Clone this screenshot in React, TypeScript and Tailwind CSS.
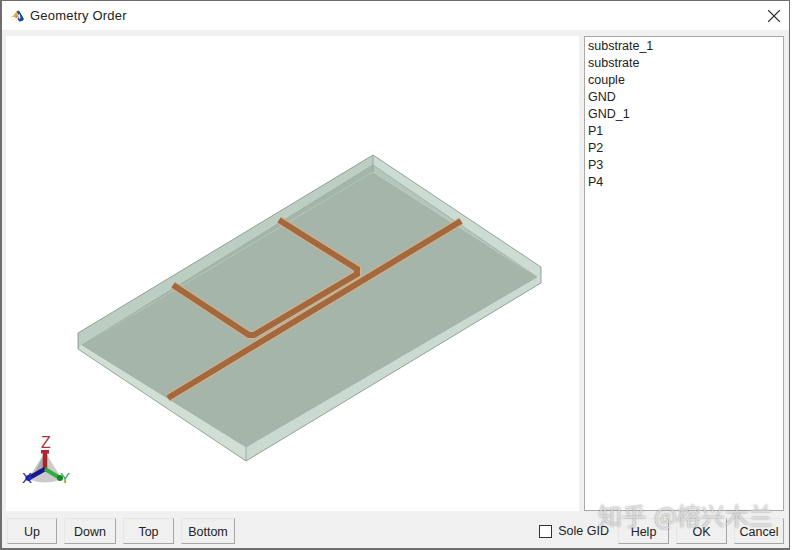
import { X } from "lucide-react";

const objects = ["substrate_1", "substrate", "couple", "GND", "GND_1", "P1", "P2", "P3", "P4"];

function Btn({ label, w }: { label: string; w: string }) {
  return (
    <button className={`h-[26px] ${w} shrink-0 bg-[#f0f0f0] border border-t-[#e6e6e6] border-l-[#e6e6e6] border-r-[#a6a6a6] border-b-[#a6a6a6] text-[12.5px] text-[#222] pt-0.5`}>
      {label}
    </button>
  );
}

function MatlabIcon() {
  return (
    <svg width="14" height="12" viewBox="0 0 14 12" className="shrink-0">
      <path d="M0 7.500 L3.500 5.500 L6.500 1.500 L7.500 4 L5 7 L2.500 6.800 Z" fill="#e3a93f" />
      <path d="M6.500 1.500 L8.500 0.500 L10 2 L14 9 L12.500 11 L9 11.500 L7.500 8.500 L8.500 5 Z" fill="#1f4a8c" />
      <path d="M8 5.500 L9.500 3.500 L10.500 8 L9 9 Z" fill="#f4f4f4" />
      <path d="M5 7 L7.500 4 L7.800 6.500 L6 8.500 Z" fill="#c9812a" />
    </svg>
  );
}

function Triad() {
  return (
    <svg width="54" height="58" viewBox="0 0 54 58" className="absolute left-[18px] top-[432px]">
      <path d="M27 20 L44 47 Q27 54 10 47 Z" fill="#cbcbcb" />
      <path d="M27 20 L27 37 L14 46 Z" fill="#a9a9a9" />
      <line x1="27" y1="38" x2="27" y2="21" stroke="#a8242c" strokeWidth="4.500" />
      <rect x="23" y="18" width="8" height="3.500" fill="#b5252e" />
      <line x1="27" y1="37" x2="11" y2="46" stroke="#15188a" strokeWidth="4.500" />
      <circle cx="10.500" cy="46" r="3" fill="#2630c8" />
      <line x1="27" y1="37" x2="42" y2="46" stroke="#2fae40" strokeWidth="4" />
      <circle cx="42" cy="46" r="3" fill="#128a22" />
      <text x="23" y="16" fontSize="16" fill="#a8343c" fontFamily="Liberation Sans, sans-serif">Z</text>
      <text x="4" y="51" fontSize="15" fill="#1c1c9c" fontFamily="Liberation Sans, sans-serif">X</text>
      <text x="42" y="51" fontSize="15" fill="#3aa84a" fontFamily="Liberation Sans, sans-serif">Y</text>
    </svg>
  );
}

function Board() {
  return (
    <svg width="573" height="475" viewBox="0 0 573 475" className="block">
      <g transform="translate(-6 -36)">
        {/* front faces, they narrow toward the side corners */}
        <path d="M78 349 L82 345 L246 447 L246 461 Z" fill="#d0ded4" />
        <path d="M246 447 L537 277 L541 283 L246 461 Z" fill="#cbdad0" />
        {/* back rims, outer and inner strip */}
        <path d="M373 155 L541 267 L541 283 L537 277 L373 165 Z" fill="#cddcd2" />
        <path d="M373 165 L537 277 L373 172 Z" fill="#b4c5ba" />
        <path d="M373 155 L78 333 L78 349 L82 345 L373 165 Z" fill="#bccdc2" />
        <path d="M373 165 L82 345 L373 172 Z" fill="#a3b6aa" />
        {/* face seen through the top */}
        <path d="M373 172 L537 277 L246 447 L82 345 Z" fill="#a6b5a9" />
        <path d="M78 333 L373 155 L541 267" fill="none" stroke="#7f9186" strokeWidth="0.8" />
        <path d="M82 345 L373 165 L537 277" fill="none" stroke="#8b9c91" strokeWidth="0.6" />
        <path d="M82 345 L246 447 L537 277" fill="none" stroke="#93a398" strokeWidth="0.6" />
        <path d="M78 333 L78 349 L246 461 L541 283 L541 267" fill="none" stroke="#7f9186" strokeWidth="0.8" />
        <line x1="373" y1="155" x2="373" y2="172" stroke="#8a9a90" strokeWidth="0.7" />
        <line x1="246" y1="447" x2="246" y2="461" stroke="#8a9a90" strokeWidth="0.7" />
        {/* traces */}
        <g fill="none" strokeLinejoin="miter">
          <path d="M168 398 L461 221" stroke="#d9b08a" strokeWidth="8" />
          <path d="M168 398 L461 221" stroke="#a2693f" strokeWidth="6" />
          <path d="M173 285 L249 335 L254 335 L357 274 L357 269 L279 220" stroke="#d9b08a" strokeWidth="8" />
          <path d="M173 285 L249 335 L254 335 L357 274 L357 269 L279 220" stroke="#a2693f" strokeWidth="6" />
        </g>
      </g>
    </svg>
  );
}

export default function App() {
  return (
    <div className="relative w-[792px] h-[550px] overflow-hidden bg-white">
      <div className="w-[790px] h-[550px] flex flex-col bg-[#f0f0f0] border-t border-l-2 border-r border-b-2 border-[#6e6e6e] font-['Liberation_Sans','Noto_Sans',sans-serif] text-[#222]">
        <header className="h-[29px] shrink-0 bg-white flex items-center pl-2 pr-1 gap-1.5">
          <MatlabIcon />
          <span className="text-[13px] tracking-[0.2px]">Geometry Order</span>
          <X className="ml-auto w-[22px] h-[22px] text-[#333]" strokeWidth={1.2} />
        </header>
        <div className="flex-1 flex flex-col pl-1">
          <div className="flex gap-[5px] h-[475px] mt-1.5">
            <div className="w-[573px] bg-white">
              <Board />
            </div>
            <ul className="w-[200px] bg-white border border-[#a9a9a9] pl-[3px] pt-px text-[12.5px] leading-[17px]">
              {objects.map((o) => (
                <li key={o}>{o}</li>
              ))}
            </ul>
          </div>
          <div className="flex items-center mt-[7px] pl-[1px] pr-[5px]">
            <div className="flex gap-[7px]">
              <Btn label="Up" w="w-[50px]" />
              <Btn label="Down" w="w-[52px]" />
              <Btn label="Top" w="w-[51px]" />
              <Btn label="Bottom" w="w-[54px]" />
            </div>
            <div className="ml-auto flex items-center">
              <span className="w-[13px] h-[13px] border border-[#333] bg-white mr-1.5" />
              <span className="text-[12.5px] mr-[9px]">Sole GID</span>
              <div className="flex gap-[7px]">
                <Btn label="Help" w="w-[51px]" />
                <Btn label="OK" w="w-[51px]" />
                <Btn label="Cancel" w="w-[50px]" />
              </div>
            </div>
          </div>
        </div>
      </div>
      <Triad />
      <div className="absolute left-[598px] top-[499px] flex items-center text-[24px] leading-8 text-white/60 [text-shadow:0_0_2px_rgba(90,90,90,0.7)] font-['Noto_Sans_CJK_SC',sans-serif]">
        <span>知乎</span>
        <span className="ml-2">@榕兴木兰</span>
      </div>
    </div>
  );
}
